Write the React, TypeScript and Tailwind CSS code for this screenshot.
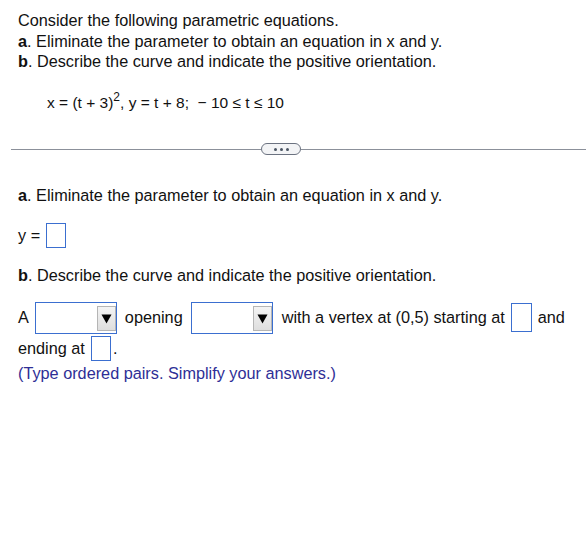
import React from 'react';

const AnswerBox: React.FC<{ w: string; h: string }> = ({ w, h }) => (
  <span className={`inline-block ${w} ${h} border border-[#3b6fd0] bg-white shrink-0`} />
);

const Dropdown: React.FC = () => (
  <div className="relative w-[82px] h-[32px] border border-[#3b6fd0] bg-white shrink-0">
    <div className="absolute right-0 top-[3px] w-[19px] h-[25px] border border-[#b5b5b5] bg-gradient-to-b from-[#f4f4f4] to-[#dedede] flex items-center justify-center">
      <svg width="11" height="11" viewBox="0 0 11 11">
        <path d="M0.5 1.5 L10.5 1.5 L5.5 10.5 Z" fill="#000" />
      </svg>
    </div>
  </div>
);

const App: React.FC = () => {
  return (
    <div className="w-[586px] h-[557px] bg-white text-[16.25px] text-[#111] font-['Liberation_Sans',Arial,sans-serif] overflow-hidden">
      {/* Question */}
      <div className="pt-[10px] pl-[18px] leading-[20.5px]">
        <p>Consider the following parametric equations.</p>
        <p><b>a</b>. Eliminate the parameter to obtain an equation in x and y.</p>
        <p><b>b</b>. Describe the curve and indicate the positive orientation.</p>
      </div>

      <div className="mt-[21px] ml-[47px] h-[20px] leading-[20px] whitespace-pre text-[15.5px]">
        x = (t + 3)<sup className="text-[12px] relative -top-[7px]">2</sup>, y = t + 8;  − 10 ≤ t ≤ 10
      </div>

      {/* Separator */}
      <div className="mt-[31px] flex items-center h-[11px] pl-[11px]">
        <div className="w-[250px] h-px bg-[#8b909a]" />
        <div className="w-[40px] h-[12px] rounded-[6px] border border-[#6b7280] bg-[#f3f4f6] flex items-center justify-center gap-[3px]">
          <span className="w-[3px] h-[3px] rounded-full bg-[#4b5563]" />
          <span className="w-[3px] h-[3px] rounded-full bg-[#4b5563]" />
          <span className="w-[3px] h-[3px] rounded-full bg-[#4b5563]" />
        </div>
        <div className="flex-1 h-px bg-[#8b909a]" />
      </div>

      {/* Answers */}
      <div className="pl-[18px]">
        <p className="mt-[30px] leading-[20px]"><b>a</b>. Eliminate the parameter to obtain an equation in x and y.</p>

        <div className="mt-[18px] flex items-center h-[25px]">
          <span className="mr-[6px]">y =</span>
          <AnswerBox w="w-[20px]" h="h-[25px]" />
        </div>

        <p className="mt-[17px] leading-[20px]"><b>b</b>. Describe the curve and indicate the positive orientation.</p>

        <div className="mt-[17px] flex items-center h-[32px] whitespace-nowrap">
          <span className="mr-[6px]">A</span>
          <Dropdown />
          <span className="mx-[8px]">opening</span>
          <Dropdown />
          <span className="ml-[9px] mr-[6px]">with a vertex at (0,5) starting at</span>
          <AnswerBox w="w-[21px]" h="h-[29px]" />
          <span className="ml-[6px]">and</span>
        </div>

        <div className="mt-[2px] flex items-center h-[25px]">
          <span className="mr-[6px]">ending at</span>
          <AnswerBox w="w-[20px]" h="h-[25px]" />
          <span className="ml-[2px]">.</span>
        </div>

        <p className="mt-[2px] leading-[20px] text-[#2e2e96]">(Type ordered pairs. Simplify your answers.)</p>
      </div>
    </div>
  );
};

export default App;
